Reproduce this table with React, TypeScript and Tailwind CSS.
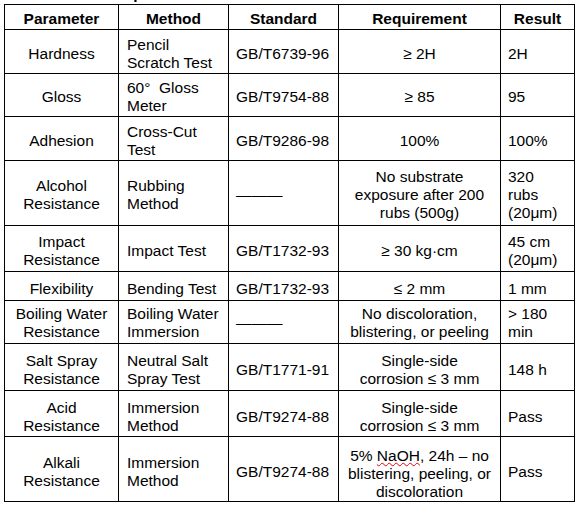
import React from "react";

type Cell = React.ReactNode;

type Row = {
  cells: Cell[];
  h: string;
  pt: string;
  // per-cell padding override, used where the source doc sits lower
  ptOverride?: Record<number, string>;
};

const rows: Row[] = [
  { cells: ["Hardness", "Pencil\nScratch Test", "GB/T6739-96", "≥ 2H", "2H"], h: "h-[44px]", pt: "pt-[5px]" },
  { cells: ["Gloss", "60°\u00a0 Gloss\nMeter", "GB/T9754-88", "≥ 85", "95"], h: "h-[43px]", pt: "pt-[3px]" },
  { cells: ["Adhesion", "Cross-Cut\nTest", "GB/T9286-98", "100%", "100%"], h: "h-[44px]", pt: "pt-[4px]" },
  {
    cells: [
      "Alcohol\nResistance",
      "Rubbing\nMethod",
      "———",
      "No substrate\nexposure after 200\nrubs (500g)",
      "320\nrubs\n(20μm)"
    ],
    h: "h-[65px]",
    pt: "pt-[3px]"
  },
  {
    cells: ["Impact\nResistance", "Impact Test", "GB/T1732-93", "≥ 30 kg·cm", "45 cm\n(20μm)"],
    h: "h-[46px]",
    pt: "pt-[4px]"
  },
  { cells: ["Flexibility", "Bending Test", "GB/T1732-93", "≤ 2 mm", "1 mm"], h: "h-[29px]", pt: "pt-[6px]" },
  {
    cells: [
      "Boiling Water\nResistance",
      "Boiling Water\nImmersion",
      "———",
      "No discoloration,\nblistering, or peeling",
      "> 180\nmin"
    ],
    h: "h-[43px]",
    pt: "pt-[2px]"
  },
  {
    cells: ["Salt Spray\nResistance", "Neutral Salt\nSpray Test", "GB/T1771-91", "Single-side\ncorrosion ≤ 3 mm", "148 h"],
    h: "h-[47px]",
    pt: "pt-[6px]"
  },
  {
    cells: ["Acid\nResistance", "Immersion\nMethod", "GB/T9274-88", "Single-side\ncorrosion ≤ 3 mm", "Pass"],
    h: "h-[46px]",
    pt: "pt-[6px]"
  },
  {
    cells: [
      "Alkali\nResistance",
      "Immersion\nMethod",
      "GB/T9274-88",
      <>
        {"5% "}
        <span className="underline decoration-wavy decoration-red-600 decoration-1 underline-offset-[1px]">NaOH</span>
        {", 24h – no\nblistering, peeling, or\ndiscoloration"}
      </>,
      "Pass"
    ],
    h: "h-[65px]",
    pt: "pt-[5px]",
    ptOverride: { 3: "pt-[10px]" }
  }
];

const headers = ["Parameter", "Method", "Standard", "Requirement", "Result"];

// padding + alignment per column
const colStyle = [
  "justify-center text-center px-[3px]",
  "text-left pl-[8px] pr-[3px]",
  "text-left pl-[7px] pr-[3px]",
  "justify-center text-center px-[3px]",
  "text-left pl-[7px] pr-[3px]"
];

export default function App() {
  return (
    <div
      className="w-[576px] h-[505px] bg-white text-black overflow-hidden"
      style={{ fontFamily: '"Liberation Sans", Arial, sans-serif' }}
    >
      <div className="h-[4px] overflow-hidden flex items-end pl-[60px]">
        <div className="text-[15.5px] leading-[18px] font-bold mb-[1px] whitespace-nowrap">
          Product Specifications
        </div>
      </div>

      <div className="ml-[4px] grid w-max grid-cols-[114px_110px_110px_162px_74px] border-l border-t border-black text-[15.5px] leading-[18px]">
        {headers.map((h) => (
          <div
            key={h}
            className="h-[25px] pt-[4px] flex items-center justify-center border-r border-b border-black font-bold"
          >
            {h}
          </div>
        ))}

        {rows.map((row, i) =>
          row.cells.map((cell, j) => (
            <div
              key={`${i}-${j}`}
              className={`${row.h} ${row.ptOverride?.[j] ?? row.pt} flex items-center border-r border-b border-black ${colStyle[j]}`}
            >
              <div className="w-full whitespace-pre">{cell}</div>
            </div>
          ))
        )}
      </div>
    </div>
  );
}
